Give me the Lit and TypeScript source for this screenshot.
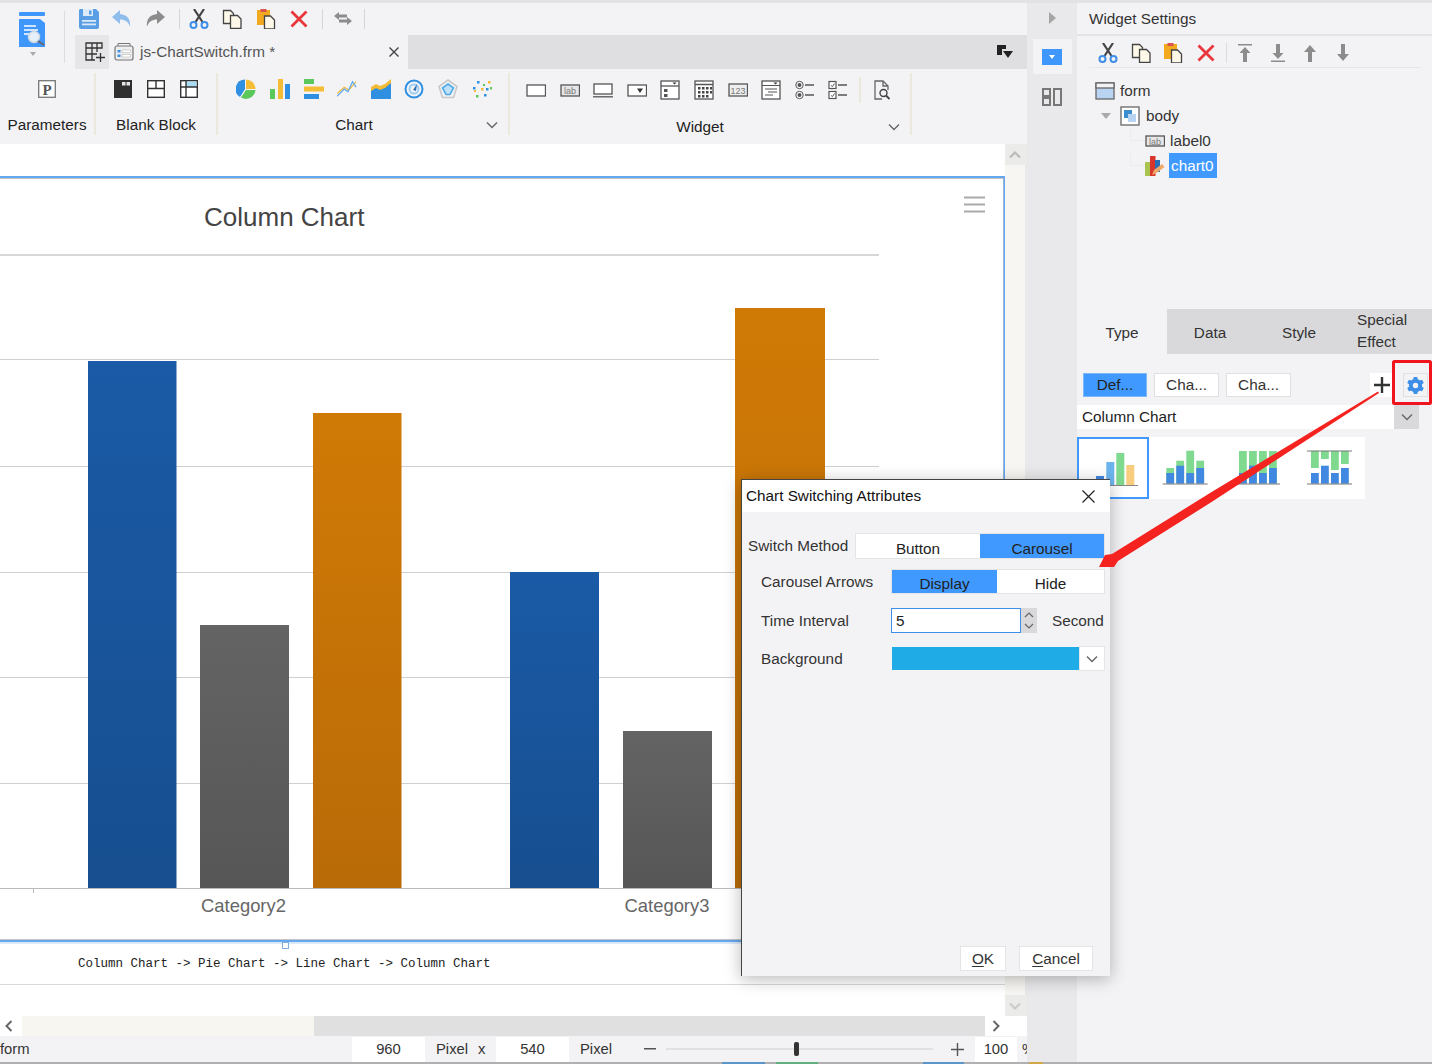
import { LitElement, html, svg, css } from "lit";
import { customElement } from "lit/decorators.js";

const B = "#3d8ee6";

const cut = () => html`<svg class="i" viewBox="0 0 20 20"><path d="M5 0 13.5 13M15 0 6.5 13" stroke="#444" stroke-width="2.2" fill="none"/><circle cx="4.5" cy="16" r="3" stroke="${B}" stroke-width="2" fill="none"/><circle cx="15.5" cy="16" r="3" stroke="${B}" stroke-width="2" fill="none"/></svg>`;
const copy = () => html`<svg class="i" viewBox="0 0 20 20"><path d="M1.5 1.5h7l3 3v10h-10z" fill="#fdf8e8" stroke="#444" stroke-width="1.3"/><path d="M8.5 6.5h7l3.5 3.5v9.5H8.500z" fill="#fdf8e8" stroke="#444" stroke-width="1.3"/></svg>`;
const paste = () => html`<svg class="i" viewBox="0 0 20 20"><rect x="1" y="1" width="13" height="15" fill="#f2a91e"/><rect x="4.500" y="0" width="6" height="3" fill="#d9534f"/><path d="M8.500 7h6l4 4v9H8.500z" fill="#fdf8e8" stroke="#444" stroke-width="1.3"/></svg>`;
const del = () => html`<svg class="i" viewBox="0 0 20 20"><path d="M2.500 2.500 17.500 17.500M17.500 2.500 2.500 17.500" stroke="#e8363a" stroke-width="2.800" fill="none"/></svg>`;
const chev = (c = "#666") => html`<svg class="chev" viewBox="0 0 12 8"><path d="M1 1.500 6 6.500 11 1.500" stroke="${c}" stroke-width="1.400" fill="none"/></svg>`;
const arrow = (d: string) => html`<svg class="i" viewBox="0 0 20 20"><path d="${d}" fill="#8c8c8c"/></svg>`;

const topIcons = {
  save: html`<svg class="i" viewBox="0 0 20 20"><path d="M1 0h16l3 3v15a2 2 0 0 1-2 2H2a2 2 0 0 1-2-2V1z" fill="#5a9fe6"/><rect x="4" y="0" width="10" height="7" fill="#dbe9f8"/><rect x="10" y="1.500" width="2.500" height="4" fill="#5a9fe6"/><rect x="3" y="11" width="14" height="1.800" fill="#dbe9f8"/><rect x="3" y="14.500" width="14" height="1.800" fill="#dbe9f8"/></svg>`,
  undo: html`<svg class="i" viewBox="0 0 20 20"><path d="M8 1 0 8l8 7v-4.500c5 0 8 2 10 7 1-7-3-12-10-12.500z" fill="#8fbdec"/></svg>`,
  redo: html`<svg class="i" viewBox="0 0 20 20"><path d="M12 1l8 7-8 7v-4.500c-5 0-8 2-10 7-1-7 3-12 10-12.500z" fill="#8c8c8c"/></svg>`,
  swap: html`<svg class="i" viewBox="0 0 20 20"><path d="M1 7 6 3v2.500h8v3H6V11zM19 12l-5-4v2.500H6v3h8V16z" fill="#8c8c8c"/></svg>`,
};

const chartIcons = [
  html`<svg class="i" viewBox="0 0 20 20"><path d="M9 .5A9.500 9.500 0 0 0 4 18l5-8z" fill="#2f8fe0"/><path d="M10 .5V10h9.500A9.500 9.500 0 0 0 10 .5z" fill="#f5bd35"/><path d="M10 11h9.500A9.500 9.500 0 0 1 5 18.500z" fill="#5cc75a"/></svg>`,
  html`<svg class="i" viewBox="0 0 20 20"><rect x="0" y="10" width="5" height="10" fill="#5cc75a"/><rect x="8" y="0" width="5" height="20" fill="#f5bd35"/><rect x="15" y="5" width="5" height="15" fill="#2f8fe0"/></svg>`,
  html`<svg class="i" viewBox="0 0 20 20"><rect x="0" y="0" width="10" height="5" fill="#5cc75a"/><rect x="0" y="7.500" width="20" height="5" fill="#f5bd35"/><rect x="0" y="15" width="15" height="5" fill="#2f8fe0"/></svg>`,
  html`<svg class="i" viewBox="0 0 22 20"><path d="M0 15 8 8l5 3 8-9" stroke="#f0b93a" stroke-width="1.300" fill="none"/><path d="M0 18l8-8 4 3 5-11 4 6" stroke="#5ba7e8" stroke-width="1.300" fill="none"/></svg>`,
  html`<svg class="i" viewBox="0 0 20 20"><path d="M0 8l5-3 4 2 5-2 6-5v20H0z" fill="#f3bb33"/><path d="M0 12l5-3 4 2 5-2 6-5v16H0z" fill="#2f8fe0"/></svg>`,
  html`<svg class="i" viewBox="0 0 20 20"><circle cx="10" cy="10" r="8.500" fill="none" stroke="#2f8fe0" stroke-width="2"/><circle cx="10" cy="10" r="4.500" fill="none" stroke="#9ccdf3" stroke-width="2"/><path d="M9 11l4-6-1 7z" fill="#2f6fb0"/></svg>`,
  html`<svg class="i" viewBox="0 0 20 20"><path d="M10 1l9 6.500-3.500 11h-11L1 7.500z" fill="none" stroke="#c8c8c8" stroke-width="1.600"/><path d="M10 5l5.500 4-3.500 6.500H8L4.500 9z" fill="#bfe1f7" stroke="#52abe6" stroke-width="1.600"/></svg>`,
  html`<svg class="i" viewBox="0 0 20 20"><g fill="#2f8fe0"><rect x="5" y="2" width="2.500" height="2.500"/><rect x="1" y="8" width="2.500" height="2.500"/><rect x="14" y="9" width="2.500" height="2.500"/><rect x="12" y="15" width="2.500" height="2.500"/></g><g fill="#f5bd35"><rect x="16" y="2" width="2.500" height="2.500"/><rect x="9" y="9" width="2.500" height="2.500"/><rect x="2" y="11" width="2" height="2"/></g><g fill="#5cc75a"><rect x="18" y="8" width="2" height="2.500"/><rect x="4" y="16" width="2.500" height="2.500"/><rect x="11" y="5" width="2" height="2"/></g></svg>`,
];

const G = "#555";
const widgetIcons = [
  html`<svg class="i" viewBox="0 0 20 20"><rect x="1" y="5" width="18.500" height="11" fill="#fff" stroke="${G}" stroke-width="1.300"/></svg>`,
  html`<svg class="i" viewBox="0 0 20 20"><rect x="1" y="5" width="18.500" height="11" fill="#e6e6e6" stroke="${G}" stroke-width="1.300"/><text x="10" y="14" class="mini">lab</text></svg>`,
  html`<svg class="i" viewBox="0 0 20 20"><rect x="1" y="4" width="18" height="10" fill="#fff" stroke="${G}" stroke-width="1.300"/><path d="M0 16.800h20" stroke="${G}" stroke-width="1.300"/></svg>`,
  html`<svg class="i" viewBox="0 0 20 20"><rect x="1" y="5" width="18.500" height="11" fill="#fff" stroke="${G}" stroke-width="1.300"/><path d="M10 8.500h6l-3 4.500z" fill="#333"/></svg>`,
  html`<svg class="i" viewBox="0 0 20 20"><rect x="1" y="1" width="18" height="18" fill="#fff" stroke="${G}" stroke-width="1.300"/><path d="M1 6h18" stroke="${G}" stroke-width="1.300"/><path d="M12.500 2.500h4l-2 2z" fill="#333"/><rect x="4" y="9" width="3.500" height="3" fill="${G}"/><rect x="4" y="14" width="3.500" height="3" fill="${G}"/></svg>`,
  html`<svg class="i" viewBox="0 0 20 20"><rect x="1" y="1" width="18" height="18" fill="#fff" stroke="${G}" stroke-width="1.300"/><path d="M1 4.500h18" stroke="${G}" stroke-width="1.500"/><g fill="#444"><rect x="4" y="7" width="2.500" height="2.500"/><rect x="8" y="7" width="2.500" height="2.500"/><rect x="12" y="7" width="2.500" height="2.500"/><rect x="16" y="7" width="2" height="2.500"/><rect x="4" y="11" width="2.500" height="2.500"/><rect x="8" y="11" width="2.500" height="2.500"/><rect x="12" y="11" width="2.500" height="2.500"/><rect x="16" y="11" width="2" height="2.500"/><rect x="4" y="15" width="2.500" height="2.500"/><rect x="8" y="15" width="2.500" height="2.500"/><rect x="12" y="15" width="2.500" height="2.500"/></g></svg>`,
  html`<svg class="i" viewBox="0 0 20 20"><rect x="1" y="4" width="18.500" height="12" fill="#eee" stroke="${G}" stroke-width="1.300"/><text x="10" y="14" class="mini">123</text></svg>`,
  html`<svg class="i" viewBox="0 0 20 20"><rect x="1" y="1" width="18" height="18" fill="#fff" stroke="${G}" stroke-width="1.300"/><path d="M1 5.500h18M4 9h12M7 12h9M4 15h8" stroke="${G}" stroke-width="1.200"/><path d="M12.500 2.500h4l-2 2z" fill="#333"/></svg>`,
  html`<svg class="i" viewBox="0 0 20 20"><circle cx="4.500" cy="5" r="3.700" fill="#fff" stroke="${G}"/><circle cx="4.500" cy="5" r="2" fill="${G}"/><circle cx="4.500" cy="15" r="3.700" fill="#fff" stroke="${G}"/><circle cx="4.500" cy="15" r="2" fill="${G}"/><path d="M10 5h9M10 15h9" stroke="${G}" stroke-width="1.300"/></svg>`,
  html`<svg class="i" viewBox="0 0 20 20"><rect x="1" y="1.500" width="7" height="7" fill="#fff" stroke="${G}" stroke-width="1.200"/><path d="M3 5.500l1.500 1 2-3" stroke="${G}" fill="none"/><rect x="1" y="11.500" width="7" height="7" fill="#fff" stroke="${G}" stroke-width="1.200"/><path d="M3 15.500l1.500 1 2-3" stroke="${G}" fill="none"/><path d="M10 5h9M10 15h9" stroke="${G}" stroke-width="1.300"/></svg>`,
];

const blankIcons = [
  html`<svg class="i18" viewBox="0 0 18 18"><path d="M0 0h18v18H0z" fill="#2f2f2f"/><rect x="8" y="2" width="3.500" height="3.500" fill="#e6e6e6"/><rect x="12.500" y="2" width="3.500" height="3.500" fill="#e6e6e6"/></svg>`,
  html`<svg class="i18" viewBox="0 0 18 18"><rect x=".7" y=".7" width="16.600" height="16.600" fill="#fff" stroke="#333" stroke-width="1.400"/><path d="M.7 8.500h16.600M9 .7v7.800" stroke="#333" stroke-width="1.400"/></svg>`,
  html`<svg class="i18" viewBox="0 0 18 18"><rect x=".7" y=".7" width="16.600" height="16.600" fill="#fff" stroke="#333" stroke-width="1.400"/><rect x="6" y="1.500" width="10.500" height="5.500" fill="#a9dcf3"/><path d="M.7 7h16.600M6 .7v16.600" stroke="#333" stroke-width="1.400"/></svg>`,
];

const gear = html`<svg class="gear" viewBox="0 0 20 20"><g fill="${B}"><circle cx="10" cy="10" r="7"/><rect x="7.800" y="1" width="4.400" height="18" rx="1"/><rect x="7.800" y="1" width="4.400" height="18" rx="1" transform="rotate(60 10 10)"/><rect x="7.800" y="1" width="4.400" height="18" rx="1" transform="rotate(120 10 10)"/></g><circle cx="10" cy="10" r="2.800" fill="#f3f3f6"/></svg>`;

const blueX = [0, 10, 20, 30];
const blueTops = [36, 28.7, 36, 31];
const thumbBars = (x0: number) =>
  blueX.map((dx, i) => svg`<rect x="${x0 + dx}" y="${blueTops[i]}" width="7.800" height="${46.7 - blueTops[i]}" fill="#4188e0"/>`);
const greenBars = (x0: number, tops: number[], bottoms: number[]) =>
  blueX.map((dx, i) => svg`<rect x="${x0 + dx}" y="${tops[i]}" width="7.800" height="${bottoms[i] - tops[i]}" fill="#7fd98e"/>`);

@customElement("app-root")
export class AppRoot extends LitElement {
  static styles = css`
    :host { display: block; width: 1432px; height: 1064px; position: relative; overflow: hidden; background: #f3f3f6; font: 15.3px/20px "Liberation Sans", Arial, sans-serif; color: #333; }
    .topline { height: 3px; background: #e2e2e4; }
    .app { display: grid; grid-template-columns: 1027px 50px 355px; height: 1059px; }
    .bottomline { height: 2px; background: #b0b0b0; display: flex; }
    .bottomline b { display: block; height: 2px; }
    svg { display: block; flex: none; }
    .i { width: 20px; height: 20px; }
    .i18 { width: 18px; height: 18px; }
    .chev { width: 12px; height: 8px; }
    .mini { font: 9px "Liberation Sans", sans-serif; fill: #777; text-anchor: middle; }

    .left { display: flex; flex-direction: column; min-width: 0; }
    .head { display: grid; grid-template-columns: 75px 1fr; height: 66px; }
    .logo { display: flex; flex-direction: column; align-items: center; padding: 9px 10px 0 0; position: relative; }
    .logo .tick { margin-top: 4px; width: 0; height: 0; border: 3.500px solid transparent; border-top: 4px solid #aaa; border-bottom: 0; }
    .logosep { position: absolute; right: 10px; top: 8px; height: 52px; width: 1px; background: #dcdcde; }
    .qrow { height: 32px; display: flex; align-items: center; gap: 13.200px; padding-left: 4px; box-sizing: border-box; }
    .qrow .sep { width: 1px; height: 20px; background: #d6d6d8; margin-right: -3.500px; }
    .qrow .sep.end { margin-left: -2px; }
    .tabs { height: 34px; background: #dfdfe1; display: flex; align-items: center; }
    .addcell { width: 34px; height: 34px; display: flex; align-items: center; justify-content: center; background: #e6e6e8; box-sizing: border-box; padding-left: 5px; }
    .tab { width: 299px; height: 34px; background: #f3f3f6; display: flex; align-items: center; padding: 0 9px 0 5px; box-sizing: border-box; gap: 6px; color: #555; }
    .tab .name { flex: 1; white-space: nowrap; }
    .tabs .grow { flex: 1; }
    .dock { margin-right: 14px; width: 16px; height: 14px; }

    .ribbon { height: 75px; display: grid; grid-template-columns: 96px 122px 292px 402px; }
    .grp { display: flex; flex-direction: column; border-right: 2px solid #ebe8de; margin: 4px 0 9px; padding-top: 6px; box-sizing: border-box; height: 62px; }
    .grp .icons { height: 22px; display: flex; align-items: center; justify-content: center; gap: 15px; }
    .grp.chart .icons { gap: 13.600px; padding-left: 2px; }
    .grp.widget .icons { gap: 13.600px; justify-content: flex-start; padding-left: 16px; }
    .grp.widget .sep { width: 2px; height: 26px; background: #ebe8de; margin: 0 -3px; }
    .grp .lab { height: 20px; margin-top: 16px; display: flex; align-items: center; color: #222; }
    .grp .lab span { flex: 1; text-align: center; }
    .grp.chart .lab { padding-right: 10px; }
    .grp.chart .lab span { padding-left: 4px; }
    .grp.widget .lab { padding-right: 10px; }
    .grp.widget .lab span { padding-left: 2px; }

    .canvaswrap { flex: 1; display: grid; grid-template-columns: 1005px 22px; min-height: 0; }
    .canvas { background: #fff; overflow: hidden; }
    .canvas svg { width: 1005px; height: 872px; }
    .title { font: 26px "Liberation Sans", sans-serif; fill: #444; }
    .cat { font: 18.400px "Liberation Sans", sans-serif; fill: #666; text-anchor: middle; }
    .note { font: 12.500px "Liberation Mono", monospace; fill: #222; }
    .vscroll { background: #e9e9eb; display: flex; flex-direction: column; }
    .vscroll .cell { height: 21px; width: 22px; background: #ebebe9; display: flex; align-items: center; justify-content: center; padding-right: 2px; box-sizing: border-box; }
    .vscroll .tr { flex: 1; width: 20px; background: #f7f6f2; }
    .hscroll { height: 20px; display: flex; align-items: stretch; }
    .hbtn { background: #fff; display: flex; align-items: center; }
    .hbtn.l { width: 22px; padding-left: 5px; box-sizing: border-box; }
    .hbtn.r { width: 42px; padding-left: 7px; box-sizing: border-box; }
    .thumb { width: 292px; background: #f8f6f1; }
    .track { flex: 1; background: #e0e0e0; }
    .status { height: 26px; display: flex; align-items: center; font-size: 14.800px; color: #333; position: relative; overflow: hidden; }
    .status > * { flex: none; }
    .status .form { width: 352px; }
    .num { background: #fff; height: 25px; display: flex; align-items: center; justify-content: center; flex: none; }
    .slider { width: 267px; height: 2px; background: #e1e1e1; position: relative; margin: 0 18px 0 10px; flex: none; }
    .slider i { position: absolute; left: 128px; top: -6px; width: 5px; height: 14px; border-radius: 2px; background: #333; }

    .strip { background: #e9e9eb; display: flex; flex-direction: column; align-items: center; }
    .strip .tri { width: 0; height: 0; margin-top: 9px; border: 6px solid transparent; border-left: 7px solid #a5a5a5; border-right: 0; }
    .strip .act { margin-top: 15px; width: 39px; height: 35px; background: #f3f3f6; display: flex; align-items: center; justify-content: center; }
    .strip .blue { width: 20px; height: 16px; background: #3f97fb; display: flex; align-items: center; justify-content: center; }
    .strip .blue i { width: 0; height: 0; border: 3.500px solid transparent; border-top: 4.500px solid #fff; border-bottom: 0; }
    .strip .lay { margin-top: 14px; }

    .right { display: flex; flex-direction: column; }
    .rhead { height: 33px; padding-left: 12px; display: flex; align-items: center; color: #333; border-bottom: 2px solid #e4e4e6; box-sizing: border-box; }
    .rtools { height: 32px; margin: 0 11px 0 12px; display: flex; align-items: center; gap: 12.500px; padding: 2px 0 0 9px; border-bottom: 1px solid #e7e7e9; box-sizing: border-box; }
    .rtools .sep { width: 1px; height: 20px; background: #dcdcde; margin: 0 -4.500px 0 -2px; }
    .tree { height: 100px; margin-top: 10px; }
    .row { height: 25px; display: flex; align-items: center; }
    .row .t { margin-left: 5px; color: #333; }
    .row .sel { margin-left: 4px; background: #4099ff; color: #fff; padding: 0 3px 0 2px; height: 25px; display: flex; align-items: center; }
    .guide { width: 15px; height: 13px; align-self: flex-start; border-left: 1px solid #ececec; border-bottom: 1px solid #ececec; box-sizing: border-box; flex: none; }
    .caret { width: 0; height: 0; border: 5px solid transparent; border-top: 6px solid #aaa; border-bottom: 0; margin-right: 9px; }

    .rtabs { height: 45px; margin-top: 131px; display: grid; grid-template-columns: 90px 86px 92px 87px; background: #d9d9dc; }
    .rtabs div { display: flex; align-items: center; justify-content: center; color: #333; padding-top: 3px; box-sizing: border-box; }
    .rtabs .on { background: #f3f3f6; }
    .rtabs .two { justify-content: flex-start; line-height: 22px; padding: 0 0 1px 12px; }
    .btns { height: 24px; margin: 19px 4px 0 6px; display: flex; gap: 7px; }
    .btn { width: 64px; box-sizing: border-box; background: #fff; border: 1px solid #e0e0e0; display: flex; align-items: center; justify-content: center; color: #333; }
    .btn.on { background: #4099ff; border-color: #7fb9f8; color: #222; }
    .btn.sq { width: 24px; }
    .btn.plus { margin-left: auto; border: 0; }
    .btn.gearb { margin-left: 2px; background: #f3f3f6; width: 25px; }
    .gear { width: 19px; height: 19px; }
    .sel2 { height: 24px; margin: 8px 13px 0 0; background: #fff; display: flex; align-items: center; }
    .sel2 span { flex: 1; padding-left: 5px; color: #222; }
    .sel2 b { width: 25px; height: 24px; background: #d9d9dc; display: flex; align-items: center; justify-content: center; }
    .thumbs { margin-top: 8px; display: flex; }
    .thumbs svg { width: 72px; height: 62px; background: #fff; }
    .thumbs .on { outline: 2px solid #4099ff; outline-offset: -2px; }

    .dlg { position: absolute; left: 741px; top: 479px; width: 369px; height: 497px; box-sizing: border-box; background: #f3f3f6; border-left: 1px solid #444; border-top: 1px solid #444; box-shadow: 0 3px 16px rgba(0,0,0,.28); display: flex; flex-direction: column; z-index: 1; }
    .dh { height: 32px; background: #fff; display: flex; align-items: center; justify-content: space-between; padding: 0 15px 0 4px; color: #111; }
    .dbody { flex: 1; padding-top: 21px; display: flex; flex-direction: column; }
    .drow { display: flex; align-items: center; padding-right: 5px; }
    .drow .l { color: #333; }
    .seg { display: flex; border: 1px solid #e4e4e6; background: #fff; box-sizing: border-box; }
    .seg div { display: flex; align-items: center; justify-content: center; padding-top: 5px; box-sizing: border-box; color: #222; }
    .seg .on { background: #4099ff; }
    .spin { width: 16px; height: 25px; background: #d9d9dc; display: flex; flex-direction: column; align-items: center; justify-content: space-around; padding: 2px 0; box-sizing: border-box; }
    .spin svg { width: 10px; height: 6px; }
    .inp { width: 130px; height: 25px; box-sizing: border-box; border: 1px solid #3f8fe8; background: #fff; display: flex; align-items: center; padding-left: 4px; color: #222; }
    .swatch { width: 188px; height: 23px; background: #1fabe6; }
    .cb { width: 26px; height: 25px; background: #fff; border: 1px solid #e6e6e8; box-sizing: border-box; display: flex; align-items: center; justify-content: center; }
    .dfoot { display: flex; justify-content: flex-end; gap: 13px; padding: 0 17px 5px 0; }
    .dfoot div { background: #fff; border: 1px solid #e4e4e6; height: 25px; box-sizing: border-box; display: flex; align-items: center; justify-content: center; color: #333; }
    .dfoot u { text-underline-offset: 2px; }

    .over { position: absolute; left: 0; top: 0; width: 1432px; height: 1064px; pointer-events: none; z-index: 2; }
  `;

  render() {
    return html`
      <div class="topline"></div>
      <div class="app">
        <section class="left">
          <div class="head">
            <div class="logo">
              <svg style="width:27px;height:36px" viewBox="0 0 27 36">
                <rect x="0" y="0" width="26" height="4" rx="1" fill="#3f97fb"/>
                <path d="M0 7h21l5 4v24H0z" fill="#3f97fb"/>
                <path d="M5 14h12M5 18h14M5 22h5" stroke="#fff" stroke-width="1.500"/>
                <circle cx="15" cy="25" r="5.500" fill="#e6f0fa" stroke="#cfd8e2" stroke-width="1.500"/>
                <path d="M19 29l6 4" stroke="#667" stroke-width="2"/>
              </svg>
              <div class="tick"></div>
              <div class="logosep"></div>
            </div>
            <div>
              <div class="qrow">
                ${topIcons.save}${topIcons.undo}${topIcons.redo}
                <div class="sep"></div>
                ${cut()}${copy()}${paste()}${del()}
                <div class="sep"></div>
                ${topIcons.swap}
                <div class="sep end"></div>
              </div>
              <div class="tabs">
                <div class="addcell">
                  <svg class="i" viewBox="0 0 20 20"><path d="M1 1h16v5H1zM1 6v12h9M7 1v17M12 1v9M1 12h11" fill="none" stroke="#333" stroke-width="1.300"/><path d="M15.500 11v9M11 15.500h9" stroke="#333" stroke-width="1.300"/></svg>
                </div>
                <div class="tab">
                  <svg class="i" viewBox="0 0 20 20"><rect x="1" y="4" width="18" height="14" rx="2" fill="#eee" stroke="#777" stroke-width="1.200"/><path d="M4 4V1.500h12V4" fill="none" stroke="#777"/><rect x="3.500" y="8" width="3" height="2.500" fill="#3d8ee6"/><rect x="3.500" y="12.500" width="3" height="2.500" fill="#3d8ee6"/><rect x="8" y="8" width="8.500" height="2.500" fill="#fff" stroke="#aaa" stroke-width=".5"/><rect x="8" y="12.500" width="8.500" height="2.500" fill="#fff" stroke="#aaa" stroke-width=".5"/></svg>
                  <span class="name">js-ChartSwitch.frm *</span>
                  <svg style="width:10px;height:10px" viewBox="0 0 10 10"><path d="M.5.5l9 9M9.500.5l-9 9" stroke="#444" stroke-width="1.400"/></svg>
                </div>
                <div class="grow"></div>
                <svg class="dock" viewBox="0 0 16 14"><path d="M0 0h9v4H5v6H0z" fill="#222"/><path d="M6 6h10l-5 7z" fill="#222"/></svg>
              </div>
            </div>
          </div>
          <div class="ribbon">
            <div class="grp">
              <div class="icons">
                <svg class="i18" viewBox="0 0 18 18"><rect x=".7" y=".7" width="16.600" height="16.600" fill="#fff" stroke="#777" stroke-width="1.300"/><text x="9" y="14.500" style="font:bold 15px 'Liberation Serif',serif;text-anchor:middle;fill:#555">P</text></svg>
              </div>
              <div class="lab"><span>Parameters</span></div>
            </div>
            <div class="grp">
              <div class="icons">${blankIcons}</div>
              <div class="lab"><span>Blank Block</span></div>
            </div>
            <div class="grp chart">
              <div class="icons">${chartIcons}</div>
              <div class="lab"><span>Chart</span>${chev()}</div>
            </div>
            <div class="grp widget">
              <div class="icons">
                ${widgetIcons}
                <div class="sep"></div>
                <svg class="i" viewBox="0 0 20 20"><path d="M10 19H3V1h8l5 5v4M11 1v5h5" fill="none" stroke="#666" stroke-width="1.300"/><circle cx="11.500" cy="13" r="3.500" fill="none" stroke="#444" stroke-width="1.400"/><path d="M14 15.500l3.500 3.500" stroke="#444" stroke-width="1.800"/></svg>
              </div>
              <div class="lab"><span>Widget</span>${chev()}</div>
            </div>
          </div>
          <div class="canvaswrap">
            <div class="canvas">
              <svg viewBox="0 144 1005 872">
                <defs>
                  <linearGradient id="gb" x1="0" y1="0" x2="0" y2="1"><stop offset="0" stop-color="#1a5aa6"/><stop offset="1" stop-color="#174f90"/></linearGradient>
                  <linearGradient id="gg" x1="0" y1="0" x2="0" y2="1"><stop offset="0" stop-color="#646464"/><stop offset="1" stop-color="#565656"/></linearGradient>
                  <linearGradient id="go" x1="0" y1="0" x2="0" y2="1"><stop offset="0" stop-color="#d07a06"/><stop offset="1" stop-color="#b96b07"/></linearGradient>
                </defs>
                <path d="M0 178.500H1003.500V939.500H0" fill="none" stroke="#c4c4c4" stroke-width="1"/>
                <path d="M0 177H1004.500V941H0" fill="none" stroke="#66a8f0" stroke-width="2"/>
                <path d="M0 943H1005" stroke="#dbe9f8" stroke-width="2"/>
                <path d="M0 255H879" stroke="#d8d8d8" stroke-width="2"/>
                <path d="M0 359.500H879M0 466.500H879M0 572.500H879M0 677.500H879M0 783.500H879" stroke="#cfcfcf" stroke-width="1"/>
                <path d="M0 888.500H879M33.500 888V893" stroke="#bbb" stroke-width="1"/>
                <text x="204" y="226" class="title">Column Chart</text>
                <path d="M964 197.500h21M964 204.500h21M964 211.500h21" stroke="#aaa" stroke-width="2.200"/>
                <rect x="88" y="361" width="88.500" height="527" fill="url(#gb)"/>
                <rect x="200" y="625" width="89" height="263" fill="url(#gg)"/>
                <rect x="313" y="413" width="88.500" height="475" fill="url(#go)"/>
                <rect x="510" y="572" width="89" height="316" fill="url(#gb)"/>
                <rect x="623" y="731" width="89" height="157" fill="url(#gg)"/>
                <rect x="735" y="308" width="90" height="580" fill="url(#go)"/>
                <text x="243.500" y="912" class="cat">Category2</text>
                <text x="667" y="912" class="cat">Category3</text>
                <rect x="282.500" y="942.500" width="6" height="6" fill="#fff" stroke="#7fb0e0"/>
                <text x="78" y="967" class="note">Column Chart -&gt; Pie Chart -&gt; Line Chart -&gt; Column Chart</text>
                <path d="M0 984.500H1005" stroke="#d9d9d9"/>
              </svg>
            </div>
            <div class="vscroll">
              <div class="cell"><svg class="chev" viewBox="0 0 12 8" style="width:14px"><path d="M1 6.500 6 1.500 11 6.500" stroke="#bbb" stroke-width="2.200" fill="none"/></svg></div>
              <div class="tr"></div>
              <div class="cell"><svg class="chev" viewBox="0 0 12 8" style="width:14px"><path d="M1 1.500 6 6.500 11 1.500" stroke="#ccc" stroke-width="2.200" fill="none"/></svg></div>
            </div>
          </div>
          <div class="hscroll">
            <div class="hbtn l"><svg style="width:8px;height:12px" viewBox="0 0 8 12"><path d="M6.500 1 1.500 6l5 5" stroke="#666" stroke-width="2" fill="none"/></svg></div>
            <div class="thumb"></div>
            <div class="track"></div>
            <div class="hbtn r"><svg style="width:8px;height:12px" viewBox="0 0 8 12"><path d="M1.500 1l5 5-5 5" stroke="#666" stroke-width="2" fill="none"/></svg></div>
          </div>
          <div class="status">
            <div class="form">form</div>
            <div class="num" style="width:73px">960</div>
            <span style="margin-left:11px;width:33px">Pixel</span>
            <span style="margin-left:9px;width:18px">x</span>
            <div class="num" style="width:73px">540</div>
            <span style="margin-left:11px;width:64px">Pixel</span>
            <svg style="width:12px;height:2px" viewBox="0 0 12 2"><rect width="12" height="1.500" fill="#555"/></svg>
            <div class="slider"><i></i></div>
            <svg style="width:13px;height:13px;margin-right:11px" viewBox="0 0 13 13"><path d="M0 6.500h13M6.500 0v13" stroke="#555" stroke-width="1.400"/></svg>
            <div class="num" style="width:42px">100</div>
            <span style="margin-left:5px">%</span>
          </div>
        </section>

        <section class="strip">
          <div class="tri"></div>
          <div class="act"><div class="blue"><i></i></div></div>
          <svg class="lay" style="width:20px;height:18px" viewBox="0 0 20 18"><g fill="none" stroke="#777" stroke-width="2"><rect x="1" y="1" width="7" height="7"/><rect x="1" y="10" width="7" height="7"/><rect x="12" y="1" width="7" height="16"/></g></svg>
        </section>

        <section class="right">
          <div class="rhead">Widget Settings</div>
          <div class="rtools">
            ${cut()}${copy()}${paste()}${del()}
            <div class="sep"></div>
            ${arrow("M3 1h14v1.500H3zM10 4l5.500 6H12v9H8v-9H4.500z")}
            ${arrow("M8 1h4v9h3.500L10 16l-5.500-6H8zM3 17.500h14V19H3z")}
            ${arrow("M10 2l6 7h-4v10H8V9H4z")}
            ${arrow("M8 1h4v10h4l-6 7-6-7h4z")}
          </div>
          <div class="tree">
            <div class="row" style="padding-left:18px">
              <svg class="i" viewBox="0 0 20 20"><rect x="1" y="2" width="18" height="16" fill="#b9d3f2" stroke="#666" stroke-width="1.300"/><rect x="1" y="2" width="18" height="5" fill="#f3f3f6" stroke="#666" stroke-width="1.300"/></svg>
              <span class="t">form</span>
            </div>
            <div class="row" style="padding-left:24px">
              <div class="caret"></div>
              <svg class="i" viewBox="0 0 20 20"><rect x="1" y="1" width="18" height="18" fill="#fff" stroke="#666" stroke-width="1.300"/><rect x="4" y="4" width="8" height="8" fill="#3a8ed0"/><rect x="8" y="8" width="8" height="8" fill="#b9d3f2"/></svg>
              <span class="t" style="margin-left:6px">body</span>
            </div>
            <div class="row" style="padding-left:53px">
              <div class="guide"></div>
              <svg class="i" viewBox="0 0 20 20"><rect x="1" y="5" width="18.500" height="10" fill="#e6e6e6" stroke="#555" stroke-width="1.300"/><text x="10" y="13.500" class="mini">lab</text></svg>
              <span class="t">label0</span>
            </div>
            <div class="row" style="padding-left:53px">
              <div class="guide"></div>
              <svg class="i" viewBox="0 0 20 20"><rect x="0" y="6" width="5.500" height="14" fill="#a8c34e"/><rect x="5" y="0" width="5.500" height="20" fill="#d9352c"/><rect x="10" y="4" width="5" height="12" fill="#2a6fb5"/><path d="M7 19l2-5 8-6 2.500 3-8 6z" fill="#f0a868"/></svg>
              <span class="sel">chart0</span>
            </div>
          </div>
          <div class="rtabs">
            <div class="on">Type</div><div>Data</div><div>Style</div><div class="two">Special<br />Effect</div>
          </div>
          <div class="btns">
            <div class="btn on">Def...</div>
            <div class="btn" style="width:65px">Cha...</div>
            <div class="btn" style="width:65px">Cha...</div>
            <div class="btn sq plus"><svg style="width:16px;height:16px" viewBox="0 0 16 16"><path d="M0 8h16M8 0v16" stroke="#333" stroke-width="2.400"/></svg></div>
            <div class="btn gearb">${gear}</div>
          </div>
          <div class="sel2"><span>Column Chart</span><b>${chev()}</b></div>
          <div class="thumbs">
            <svg class="on" viewBox="0 0 72 62">
              <rect x="19" y="39" width="8" height="9" fill="#4188e0"/><rect x="29.300" y="25" width="8" height="23" fill="#6db4ee"/><rect x="39.300" y="16" width="8" height="32" fill="#7fd98e"/><rect x="49.300" y="28" width="8" height="20" fill="#f8cd7e"/>
              <path d="M14 48.500h47" stroke="#888"/>
            </svg>
            <svg viewBox="0 0 72 62">
              ${greenBars(17.3, [31, 23.7, 13.7, 23.7], [46, 46, 46, 46])}
              ${thumbBars(17.3)}
              <path d="M13.700 47h45" stroke="#777"/>
            </svg>
            <svg viewBox="0 0 72 62">
              ${greenBars(18, [14, 14, 14, 14], [46, 46, 46, 46])}
              ${thumbBars(18)}
              <path d="M14 47h45" stroke="#777"/>
            </svg>
            <svg viewBox="0 0 72 62">
              ${greenBars(18, [14, 14, 14, 14], [31, 22, 33, 27])}
              ${thumbBars(18)}
              <path d="M14 14h45M14 47h45" stroke="#777"/>
            </svg>
          </div>
        </section>
      </div>
      <div class="bottomline">
        <b style="width:722px"></b><b style="width:43px;background:#5c96c8"></b><b style="width:11px"></b><b style="width:42px;background:#63ae7e"></b><b style="width:105px"></b><b style="width:41px;background:#5c96c8"></b><b style="width:65px"></b><b style="width:14px;background:#cfa948"></b>
      </div>

      <div class="dlg">
        <div class="dh">
          <span>Chart Switching Attributes</span>
          <svg style="width:13px;height:13px" viewBox="0 0 13 13"><path d="M.5.500l12 12M12.500.500l-12 12" stroke="#222" stroke-width="1.200"/></svg>
        </div>
        <div class="dbody">
          <div class="drow" style="height:26px;padding-left:6px">
            <span class="l" style="width:107px">Switch Method</span>
            <div class="seg" style="width:250px;height:26px"><div style="width:124px">Button</div><div class="on" style="flex:1">Carousel</div></div>
          </div>
          <div class="drow" style="height:25px;margin-top:10px;padding-left:19px">
            <span class="l" style="width:130px">Carousel Arrows</span>
            <div class="seg" style="width:214px;height:25px"><div class="on" style="width:105px">Display</div><div style="flex:1">Hide</div></div>
          </div>
          <div class="drow" style="height:25px;margin-top:14px;padding-left:19px">
            <span class="l" style="width:130px">Time Interval</span>
            <div class="inp">5</div>
            <div class="spin">
              <svg viewBox="0 0 10 6"><path d="M1 5l4-4 4 4" stroke="#666" stroke-width="1.200" fill="none"/></svg>
              <svg viewBox="0 0 10 6"><path d="M1 1l4 4 4-4" stroke="#666" stroke-width="1.200" fill="none"/></svg>
            </div>
            <span class="l" style="margin-left:15px">Second</span>
          </div>
          <div class="drow" style="height:25px;margin-top:13px;padding-left:19px">
            <span class="l" style="width:131px">Background</span>
            <div class="swatch"></div>
            <div class="cb">${chev()}</div>
          </div>
          <div style="flex:1"></div>
          <div class="dfoot">
            <div style="width:46px"><span><u>O</u>K</span></div>
            <div style="width:74px"><span><u>C</u>ancel</span></div>
          </div>
        </div>
      </div>

      <svg class="over" viewBox="0 0 1432 1064">
        <rect x="1393.500" y="361.500" width="37" height="42" fill="none" stroke="#f0141e" stroke-width="3" rx="1"/>
        <path d="M1378 391.500 1210 493 1112 554 1105 555 1099 567 1114 567 1118 561 1210 503 1379 393z" fill="#f4231f"/>
      </svg>
    `;
  }
}
